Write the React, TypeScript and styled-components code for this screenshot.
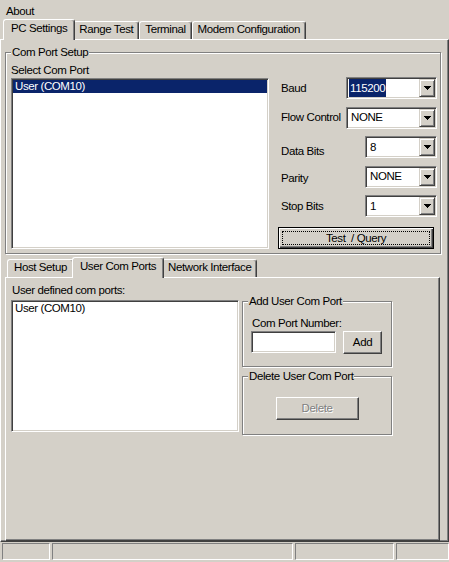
import React from "react";
import styled, { createGlobalStyle } from "styled-components";

const FACE = "#d4d0c8";
const SHADOW = "#808080";
const DARK = "#404040";
const NAVY = "#0a246a";

const GlobalStyle = createGlobalStyle`
  * { box-sizing: border-box; }
  html, body { margin: 0; padding: 0; background: ${FACE}; }
  body {
    font-family: "Liberation Sans", Arial, sans-serif;
    font-size: 11.5px;
    line-height: 13px;
    letter-spacing: -0.4px;
    color: #000;
  }
`;

const Window = styled.div`
  width: 449px;
  height: 562px;
  display: flex;
  flex-direction: column;
  background: ${FACE};
  overflow: hidden;
`;

const MenuBar = styled.div`
  height: 19px;
  padding: 5px 0 0 6px;
  display: flex;
`;

const TabControl = styled.div<{ $inner?: boolean }>`
  flex: 1;
  min-height: 0;
  display: flex;
  flex-direction: column;
  margin-top: ${p => (p.$inner ? 3 : 0)}px;
  width: ${p => (p.$inner ? "435px" : "auto")};
`;

const TabStrip = styled.div<{ $pad: number }>`
  height: 20px;
  display: flex;
  align-items: flex-end;
  padding-left: ${p => p.$pad}px;
  position: relative;
  z-index: 1;
`;

const Tab = styled.div<{ $active?: boolean; $pad?: number }>`
  height: ${p => (p.$active ? 21 : 18)}px;
  margin: ${p => (p.$active ? "0 -2px -1px" : "0")};
  padding: ${p => (p.$active ? 2 : 1)}px ${p => (p.$pad ?? 5) + (p.$active ? 2 : 0)}px 0;
  background: ${FACE};
  border: 1px solid;
  border-color: #fff ${DARK} transparent #fff;
  border-bottom: none;
  border-radius: 3px 3px 0 0;
  box-shadow: inset -1px 0 ${SHADOW};
  white-space: nowrap;
  position: relative;
  z-index: ${p => (p.$active ? 2 : 1)};
`;

const TabPanel = styled.div<{ $pad?: string }>`
  flex: 1;
  min-height: 0;
  display: flex;
  flex-direction: column;
  padding: ${p => p.$pad ?? "0"};
  background: ${FACE};
  border: 1px solid;
  border-color: #fff ${DARK} ${DARK} #fff;
  box-shadow: inset -1px -1px ${SHADOW};
`;

const GroupBox = styled.fieldset<{ $width: number; $top: number }>`
  width: ${p => p.$width}px;
  min-width: 0;
  margin: ${p => p.$top}px 0 0;
  padding: 0;
  border: 1px solid ${SHADOW};
  box-shadow: inset 1px 1px #fff, 1px 1px #fff;
`;

const GroupTitle = styled.legend`
  margin-left: 5px;
  padding: 0 1px;
  line-height: 13px;
  background: ${FACE};
`;

const SetupBody = styled.div`
  display: flex;
  gap: 9px;
  padding: 0 3px 4px 5px;
`;

const PortColumn = styled.div`
  display: flex;
  flex-direction: column;
  padding-top: 5px;
`;

const FieldLabel = styled.div<{ $gap?: number; $indent?: number }>`
  height: 13px;
  margin: 0 0 ${p => p.$gap ?? 1}px ${p => p.$indent ?? 0}px;
  white-space: nowrap;
`;

const ListBox = styled.div<{ $width: number; $height: number }>`
  width: ${p => p.$width}px;
  height: ${p => p.$height}px;
  padding: 1px;
  background: #fff;
  border: 1px solid;
  border-color: ${SHADOW} #fff #fff ${SHADOW};
  box-shadow: inset 1px 1px ${DARK}, inset -1px -1px ${FACE};
`;

const ListItem = styled.div<{ $selected?: boolean }>`
  height: 13px;
  padding: 0 2px;
  white-space: nowrap;
  background: ${p => (p.$selected ? NAVY : "transparent")};
  color: ${p => (p.$selected ? "#fff" : "#000")};
`;

const SettingsColumn = styled.div`
  width: 159px;
  display: flex;
  flex-direction: column;
  gap: 7.5px;
  padding-top: 18px;
`;

const SettingRow = styled.div`
  height: 22px;
  display: flex;
  align-items: center;
  justify-content: space-between;
`;

const SettingLabel = styled.span<{ $drop?: number }>`
  padding-left: 3px;
  margin-top: ${p => p.$drop ?? 0}px;
  white-space: nowrap;
`;

const ComboBox = styled.div<{ $width: number }>`
  width: ${p => p.$width}px;
  height: 22px;
  display: flex;
  padding: 1px;
  background: #fff;
  border: 1px solid;
  border-color: ${SHADOW} #fff #fff ${SHADOW};
  box-shadow: inset 1px 1px ${DARK}, inset -1px -1px ${FACE};
`;

const ComboText = styled.div`
  flex: 1;
  display: flex;
  padding-left: 1px;
`;

const ComboValue = styled.span<{ $selected?: boolean }>`
  display: flex;
  align-items: center;
  padding: 0 ${p => (p.$selected ? 1 : 2)}px;
  background: ${p => (p.$selected ? NAVY : "transparent")};
  color: ${p => (p.$selected ? "#fff" : "#000")};
`;

const DropButton = styled.div`
  width: 16px;
  height: 18px;
  display: flex;
  align-items: center;
  justify-content: center;
  background: ${FACE};
  border: 1px solid;
  border-color: ${FACE} ${DARK} ${DARK} ${FACE};
  box-shadow: inset 1px 1px #fff, inset -1px -1px ${SHADOW};
`;

const PushButton = styled.button<{ $width: number; $height: number; $default?: boolean }>`
  width: ${p => p.$width}px;
  height: ${p => p.$height}px;
  padding: 0;
  font: inherit;
  letter-spacing: inherit;
  white-space: pre;
  color: #000;
  background: ${FACE};
  border: 1px solid;
  border-color: ${p => (p.$default ? "#000" : `#fff ${DARK} ${DARK} #fff`)};
  box-shadow: ${p =>
    p.$default
      ? `inset 1px 1px #fff, inset -1px -1px ${DARK}, inset -2px -2px ${SHADOW}`
      : `inset -1px -1px ${SHADOW}`};
  outline: ${p => (p.$default ? "1px dotted #000" : "none")};
  outline-offset: -5px;
  &:disabled {
    color: ${SHADOW};
    text-shadow: 1px 1px #fff;
  }
`;

const TestButton = styled(PushButton)`
  margin-top: 2.5px;
`;

const PortsBody = styled.div`
  display: flex;
  align-items: flex-start;
`;

const GroupColumn = styled.div`
  display: flex;
  flex-direction: column;
  margin-left: 3px;
`;

const AddBody = styled.div`
  padding: 9px 0 12px 8px;
`;

const AddRow = styled.div`
  display: flex;
  gap: 7px;
`;

const TextBox = styled.div`
  width: 85px;
  height: 22px;
  background: #fff;
  border: 1px solid;
  border-color: ${SHADOW} #fff #fff ${SHADOW};
  box-shadow: inset 1px 1px ${DARK}, inset -1px -1px ${FACE};
`;

const DeleteBody = styled.div`
  display: flex;
  justify-content: center;
  padding: 14px 0 14px;
`;

const StatusBar = styled.div`
  height: 20px;
  display: flex;
  gap: 2px;
  padding: 1px 0 0 2px;
`;

const StatusPane = styled.div<{ $width: number }>`
  width: ${p => p.$width}px;
  height: 17px;
  border: 1px solid;
  border-color: ${SHADOW} #fff #fff ${SHADOW};
`;

function DownArrow() {
  return (
    <svg width="7" height="4" viewBox="0 0 7 4" shapeRendering="crispEdges">
      <path d="M0 0h7v1H0zM1 1h5v1H1zM2 2h3v1H2zM3 3h1v1H3z" fill="#000" />
    </svg>
  );
}

function Combo({ width, value, selected }: { width: number; value: string; selected?: boolean }) {
  return (
    <ComboBox $width={width}>
      <ComboText>
        <ComboValue $selected={selected}>{value}</ComboValue>
      </ComboText>
      <DropButton>
        <DownArrow />
      </DropButton>
    </ComboBox>
  );
}

const settings = [
  { label: "Baud", value: "115200", width: 91, selected: true },
  { label: "Flow Control", value: "NONE", width: 91 },
  { label: "Data Bits", value: "8", width: 72, drop: 8 },
  { label: "Parity", value: "NONE", width: 72, drop: 3 },
  { label: "Stop Bits", value: "1", width: 72 },
];

export default function App() {
  return (
    <Window>
      <GlobalStyle />
      <MenuBar>
        <span>About</span>
      </MenuBar>

      <TabControl>
        <TabStrip $pad={5}>
          <Tab $active>PC Settings</Tab>
          <Tab>Range Test</Tab>
          <Tab>Terminal</Tab>
          <Tab>Modem Configuration</Tab>
        </TabStrip>
        <TabPanel $pad="0 0 0 4px">
          <GroupBox $width={436} $top={6}>
            <GroupTitle>Com Port Setup</GroupTitle>
            <SetupBody>
              <PortColumn>
                <FieldLabel>Select Com Port</FieldLabel>
                <ListBox $width={258} $height={171}>
                  <ListItem $selected>User (COM10)</ListItem>
                </ListBox>
              </PortColumn>
              <SettingsColumn>
                {settings.map(s => (
                  <SettingRow key={s.label}>
                    <SettingLabel $drop={s.drop}>{s.label}</SettingLabel>
                    <Combo width={s.width} value={s.value} selected={s.selected} />
                  </SettingRow>
                ))}
                <TestButton $width={156} $height={22} $default>
                  {"Test  / Query"}
                </TestButton>
              </SettingsColumn>
            </SetupBody>
          </GroupBox>

          <TabControl $inner>
            <TabStrip $pad={2}>
              <Tab $pad={6}>Host Setup</Tab>
              <Tab $active>User Com Ports</Tab>
              <Tab>Network Interface</Tab>
            </TabStrip>
            <TabPanel $pad="6px 0 0 5px">
              <PortsBody>
                <div>
                  <FieldLabel $gap={3} $indent={1}>
                    User defined com ports:
                  </FieldLabel>
                  <ListBox $width={228} $height={132}>
                    <ListItem>User (COM10)</ListItem>
                  </ListBox>
                </div>
                <GroupColumn>
                  <GroupBox $width={150} $top={11}>
                    <GroupTitle>Add User Com Port</GroupTitle>
                    <AddBody>
                      <FieldLabel $indent={1}>Com Port Number:</FieldLabel>
                      <AddRow>
                        <TextBox />
                        <PushButton $width={39} $height={23}>
                          Add
                        </PushButton>
                      </AddRow>
                    </AddBody>
                  </GroupBox>
                  <GroupBox $width={150} $top={3}>
                    <GroupTitle>Delete User Com Port</GroupTitle>
                    <DeleteBody>
                      <PushButton $width={83} $height={23} disabled>
                        Delete
                      </PushButton>
                    </DeleteBody>
                  </GroupBox>
                </GroupColumn>
              </PortsBody>
            </TabPanel>
          </TabControl>
        </TabPanel>
      </TabControl>

      <StatusBar>
        <StatusPane $width={48} />
        <StatusPane $width={242} />
        <StatusPane $width={100} />
        <StatusPane $width={53} />
      </StatusBar>
    </Window>
  );
}
